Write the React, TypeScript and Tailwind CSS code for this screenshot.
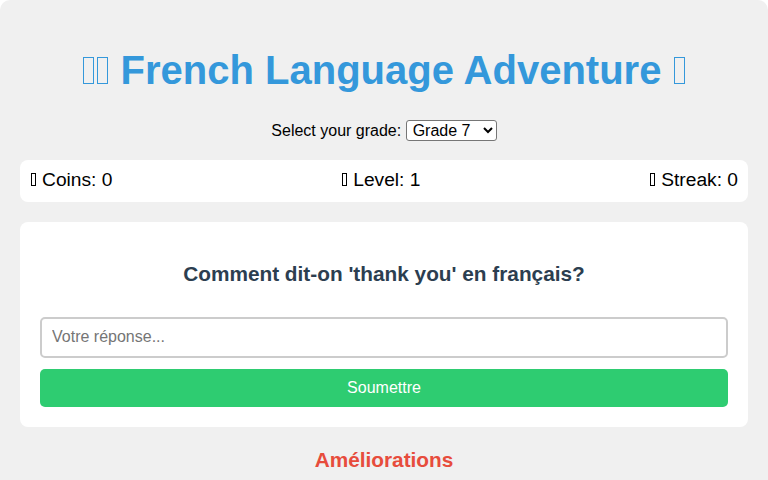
import React, { useState } from "react";

function Tofu({ label, className = "" }: { label: string; className?: string }) {
  return (
    <span
      role="img"
      aria-label={label}
      className={
        "mx-[0.035em] inline-block h-[0.67em] w-[0.28em] border-solid align-baseline " + className
      }
    />
  );
}

export default function App() {
  const [grade, setGrade] = useState("7");
  return (
    <div className="min-h-screen bg-white" style={{ fontFamily: '"Liberation Sans", Arial, sans-serif' }}>
      <div className="mx-auto max-w-[800px] rounded-[10px] bg-[#f0f0f0] p-5 text-black">
        <h1 className="my-[26.8px] text-center text-[40px] font-bold leading-[46px] text-[#3498db]">
          <Tofu label="🇫" className="border-[1.5px] border-[#3498db]" />
          <Tofu label="🇷" className="border-[1.5px] border-[#3498db]" /> French Language Adventure{" "}
          <Tofu label="🗼" className="border-[1.5px] border-[#3498db]" />
        </h1>
        <div className="mb-[19px] flex items-center justify-center text-base leading-[21px]">
          <span>Select your grade:&nbsp;</span>
          <select
            value={grade}
            onChange={(e) => setGrade(e.target.value)}
            className="h-[21px] rounded-[3px] border border-[#767676] bg-white pl-[2px] text-base leading-[18px]"
          >
            {Array.from({ length: 12 }, (_, i) => (
              <option key={i + 1} value={String(i + 1)}>
                Grade {i + 1}
              </option>
            ))}
          </select>
        </div>
        <div className="flex h-[42px] items-center justify-between rounded-[8px] bg-white px-[10px] text-[19.2px]">
          <span>
            <Tofu label="💰" className="border border-black" /> Coins: 0
          </span>
          <span>
            <Tofu label="📈" className="border border-black" /> Level: 1
          </span>
          <span>
            <Tofu label="🔥" className="border border-black" /> Streak: 0
          </span>
        </div>
        <div className="mt-5 rounded-[8px] bg-white p-5">
          <h2 className="mb-[31px] mt-5 text-center text-[20.8px] font-bold leading-[24px] text-[#2c3e50]">
            Comment dit-on 'thank you' en français?
          </h2>
          <input
            type="text"
            placeholder="Votre réponse..."
            className="box-border block h-[41px] w-full rounded-[5px] border-2 border-[#cccccc] bg-white px-[10px] text-base placeholder:text-[#757575]"
          />
          <button className="mt-[11px] block h-[38px] w-full rounded-[5px] bg-[#2ecc71] text-base text-white">
            Soumettre
          </button>
        </div>
        <h3 className="mt-[21px] text-center text-[20.8px] font-bold leading-[24px] text-[#e74c3c]">
          Améliorations
        </h3>
      </div>
    </div>
  );
}
